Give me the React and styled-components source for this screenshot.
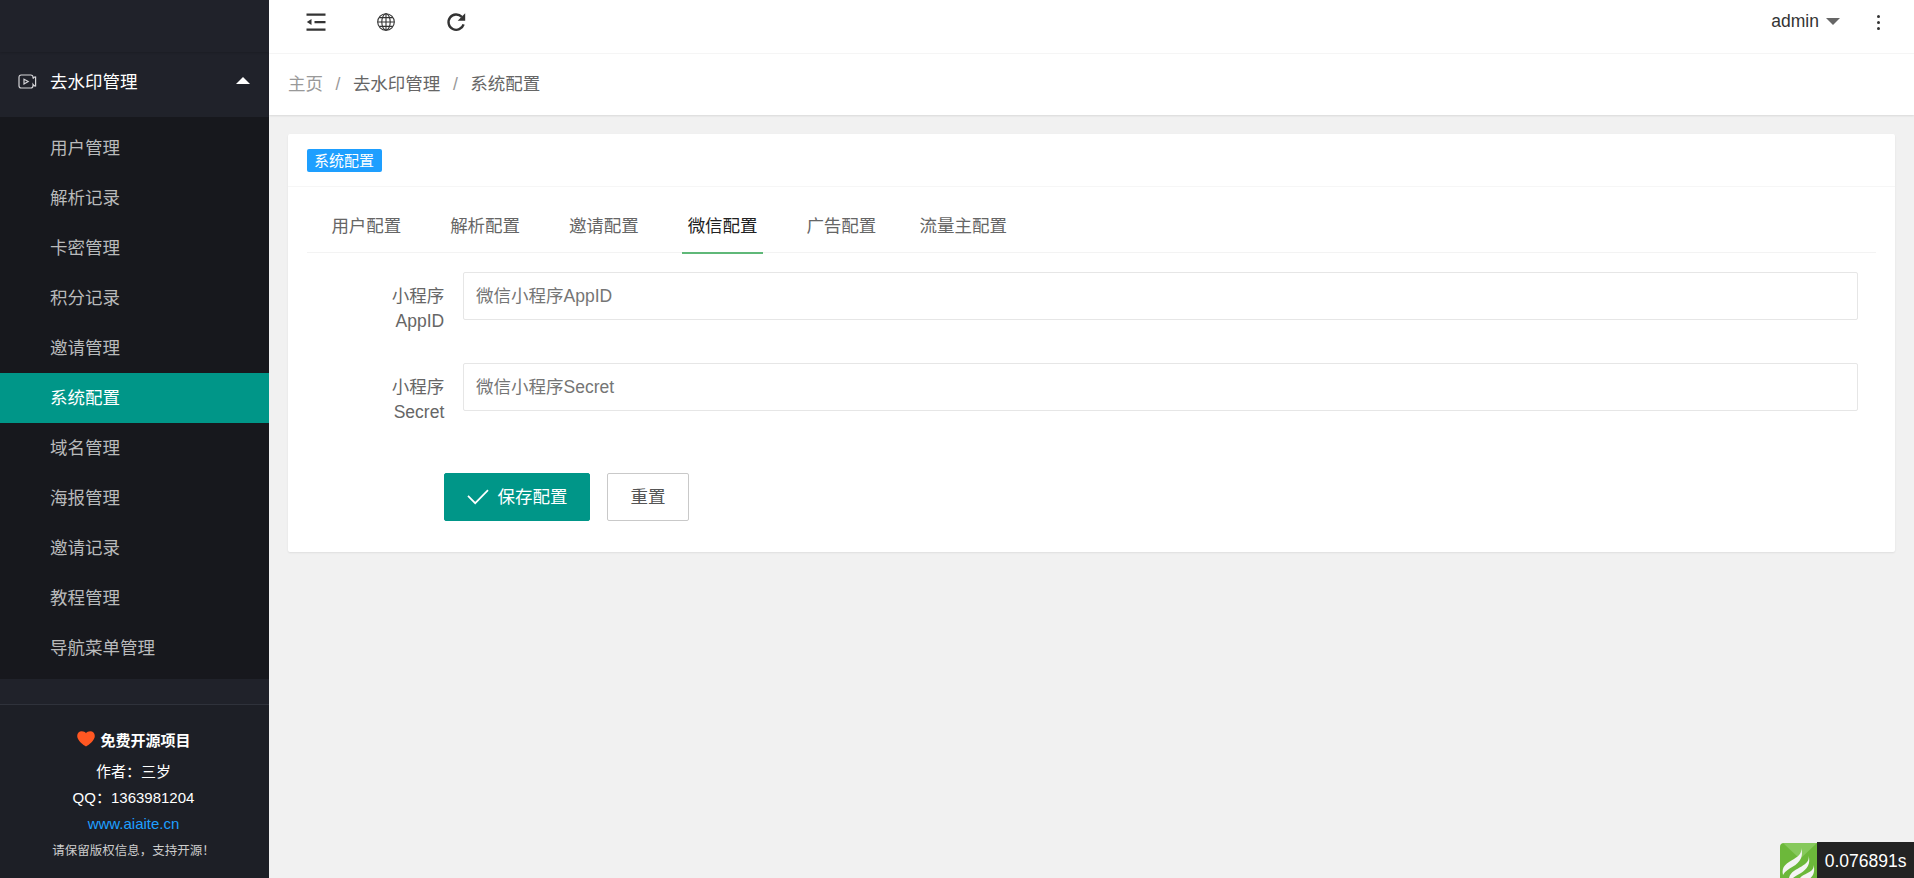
import React, { useState } from 'react'
import styled, { createGlobalStyle } from 'styled-components'

const menuItems = [
  '用户管理',
  '解析记录',
  '卡密管理',
  '积分记录',
  '邀请管理',
  '系统配置',
  '域名管理',
  '海报管理',
  '邀请记录',
  '教程管理',
  '导航菜单管理',
]

const tabs = ['用户配置', '解析配置', '邀请配置', '微信配置', '广告配置', '流量主配置']

function Sidebar({ active, setActive }) {
  return (
    <Side>
      <Logo />
      <NavTitle>
        <svg width="19" height="16" viewBox="0 0 19 16" fill="none" stroke="#d5d5d8" strokeWidth="1.2">
          <path d="M15 4.600V3.200Q15 1 12.800 1H3.200Q1 1 1 3.200v8.600Q1 14 3.200 14h9.600q2.200 0 2.200-2.200v-1.400q1.400 2 2.600 1.600V3q-1.200-.4-2.600 1.600" />
          <path d="M6 5.200v4.800l4.200-2.400z" />
        </svg>
        <span>去水印管理</span>
        <CaretUp />
      </NavTitle>
      <SubMenu>
        {menuItems.map((item) => (
          <MenuItem key={item} $active={item === active} onClick={() => setActive(item)}>
            {item}
          </MenuItem>
        ))}
      </SubMenu>
      <Copyright>
        <Project>
          <svg width="18" height="16" viewBox="0 0 18 16">
            <path
              fill="#ff5722"
              d="M9 15.600C6.500 14 .2 9.600 .2 5 .2 2.200 2.200.3 4.700.3 6.600.3 8.100 1 9 2.200 9.900 1 11.400.3 13.300.3c2.500 0 4.500 1.900 4.500 4.700 0 4.600-6.300 9-8.800 10.600z"
            />
          </svg>
          免费开源项目
        </Project>
        <Line>作者：三岁</Line>
        <Line>QQ：1363981204</Line>
        <Line><SiteLink href="#">www.aiaite.cn</SiteLink></Line>
        <Note>请保留版权信息，支持开源！</Note>
      </Copyright>
    </Side>
  )
}

function Header() {
  return (
    <TopBar>
      <IconCell>
        <svg width="20" height="20" viewBox="0 0 20 20" fill="#333">
          <path d="M.5 1.500h19v2.300H.5zM8.500 9h11v2.300h-11zM.5 16.500h19v2.300H.5zM.8 10.100l4.700-3v6z" />
        </svg>
      </IconCell>
      <IconCell>
        <svg width="18" height="18" viewBox="0 0 18 18" fill="none" stroke="#333" strokeWidth="1.100">
          <circle cx="9" cy="9" r="8.300" />
          <ellipse cx="9" cy="9" rx="4.200" ry="8.300" />
          <path d="M9 .7v16.600M.7 9h16.600M2.200 4.600h13.600M2.200 13.400h13.600" />
        </svg>
      </IconCell>
      <IconCell>
        <svg width="20" height="20" viewBox="0 0 20 20">
          <path d="M17.600 12.400A7.700 7.700 0 1 1 15.800 4.800" fill="none" stroke="#333" strokeWidth="2.400" />
          <path d="M19.200 1.200v7.500h-7.500z" fill="#333" />
        </svg>
      </IconCell>
      <User>
        admin
        <CaretDown />
      </User>
      <More>
        <i />
        <i />
        <i />
      </More>
    </TopBar>
  )
}

function ConfigForm() {
  return (
    <Form onSubmit={(e) => e.preventDefault()}>
      <FormItem>
        <Label>小程序 AppID</Label>
        <Input placeholder="微信小程序AppID" />
      </FormItem>
      <FormItem>
        <Label>小程序 Secret</Label>
        <Input placeholder="微信小程序Secret" />
      </FormItem>
      <Actions>
        <Button $primary>
          <svg width="22" height="16" viewBox="0 0 22 16" fill="none" stroke="#fff" strokeWidth="1.700">
            <path d="M1 6.800l7.200 7.400L21 1.200" />
          </svg>
          保存配置
        </Button>
        <Button type="reset">重置</Button>
      </Actions>
    </Form>
  )
}

export default function App() {
  const [active, setActive] = useState('系统配置')
  const [tab, setTab] = useState('微信配置')

  return (
    <Layout>
      <GlobalStyle />
      <Sidebar active={active} setActive={setActive} />
      <Main>
        <Header />
        <Breadcrumb>
          <Crumb $muted>主页</Crumb>
          <Slash>/</Slash>
          <Crumb>去水印管理</Crumb>
          <Slash>/</Slash>
          <Crumb>{active}</Crumb>
        </Breadcrumb>
        <Card>
          <CardHeader>
            <Badge>系统配置</Badge>
          </CardHeader>
          <CardBody>
            <Tabs>
              {tabs.map((t) => (
                <Tab key={t} onClick={() => setTab(t)}>
                  <TabText $active={t === tab}>{t}</TabText>
                </Tab>
              ))}
            </Tabs>
            <ConfigForm />
          </CardBody>
        </Card>
      </Main>
      <Trace>
        <svg width="37" height="35" viewBox="0 0 37 35">
          <path d="M0 35V4q0-4 4-4h33v35z" fill="#6cb83a" />
          <path d="M3 0h34L20 16z" fill="#86c95c" />
          <path d="M21 5c1 5-2 8-7 11C7 20 1 23 3 32c2-4 6-6 10-8.500C20 19.500 24 13 21 5z" fill="#f4f4f4" />
          <path d="M28.500 12.500c1 5-2 8-7 11-5 3-11 5-12.500 11.500h4c2-2 5-3 8-5 6-4 10-9 7.500-17.500z" fill="#f4f4f4" />
          <path d="M33.500 22c.5 4-2 6-6 8-3 1.500-6 3-7.500 5h10.500c3.500-3 4.500-8 3-13z" fill="#f4f4f4" />
        </svg>
        <TraceTime>0.076891s</TraceTime>
      </Trace>
    </Layout>
  )
}

const GlobalStyle = createGlobalStyle`
  * {
    box-sizing: border-box;
  }
  body {
    margin: 0;
    overflow: hidden;
    background: #f1f1f1;
    color: #666;
    font: 17.5px/25px "Liberation Sans", "Noto Sans CJK SC", sans-serif;
  }
  svg {
    display: block;
    flex: none;
  }
`

const Layout = styled.div`
  display: flex;
  height: 878px;
`

const Side = styled.aside`
  display: flex;
  flex-direction: column;
  width: 269px;
  flex: none;
  background: #20222a;
  color: #fff;
`

const Logo = styled.div`
  height: 52px;
  flex: none;
  box-shadow: 0 1px 2px rgba(0, 0, 0, 0.15);
`

const NavTitle = styled.div`
  display: flex;
  align-items: center;
  height: 65px;
  padding: 0 19px 5px 18px;
  flex: none;

  span {
    margin-left: 13px;
    flex: 1;
  }
`

const CaretUp = styled.i`
  margin-bottom: 3px;
  border: 7px solid transparent;
  border-top: 0;
  border-bottom-color: #fff;
`

const CaretDown = styled.i`
  margin-left: 7px;
  border: 7px solid transparent;
  border-bottom: 0;
  border-top-color: #666;
`

const SubMenu = styled.div`
  padding: 6px 0;
  background: #17181d;
`

const MenuItem = styled.div`
  height: 50px;
  padding-left: 50px;
  line-height: 50px;
  cursor: pointer;
  color: ${(p) => (p.$active ? '#fff' : '#b9babb')};
  background: ${(p) => (p.$active ? '#009688' : 'transparent')};
`

const Copyright = styled.div`
  display: flex;
  flex-direction: column;
  align-items: center;
  flex: 1;
  margin-top: 25px;
  padding: 23px 2px 0 0;
  border-top: 1px solid #2f323b;
  background: #1d1f26;
  font-size: 15px;
`

const Project = styled.div`
  display: flex;
  gap: 5px;
  height: 31px;
  padding-left: 1px;
  font-weight: bold;

  svg {
    margin-top: 3px;
  }
`

const Line = styled.div`
  height: 26px;
  line-height: 26px;
`

const SiteLink = styled.a`
  color: #1e9fff;
  text-decoration: none;
`

const Note = styled.div`
  line-height: 28px;
  font-size: 12.5px;
  color: #ccc;
`

const Main = styled.main`
  flex: 1;
  min-width: 0;
`

const TopBar = styled.header`
  display: flex;
  align-items: flex-start;
  height: 54px;
  padding: 0 34px 0 12px;
  background: #fff;
  border-bottom: 1px solid #f6f6f6;
`

const IconCell = styled.div`
  display: flex;
  align-items: center;
  justify-content: center;
  width: 70px;
  height: 44px;
`

const User = styled.div`
  display: flex;
  align-items: center;
  height: 43px;
  margin-left: auto;
  color: #333;
`

const More = styled.div`
  display: flex;
  flex-direction: column;
  justify-content: center;
  gap: 3px;
  height: 45px;
  margin-left: 37px;

  i {
    width: 3px;
    height: 3px;
    border-radius: 50%;
    background: #333;
  }
`

const Breadcrumb = styled.div`
  display: flex;
  align-items: center;
  height: 61px;
  padding: 0 19px;
  background: #fff;
  box-shadow: 0 1px 2px rgba(0, 0, 0, 0.1);
`

const Crumb = styled.span`
  color: ${(p) => (p.$muted ? '#999' : '#666')};
`

const Slash = styled.span`
  margin: 0 12.500px;
  color: #999;
`

const Card = styled.section`
  height: 418px;
  margin: 19px 19px 0;
  border-radius: 2px;
  background: #fff;
  box-shadow: 0 1px 2px rgba(0, 0, 0, 0.08);
`

const CardHeader = styled.div`
  display: flex;
  align-items: center;
  height: 53px;
  padding: 0 19px;
  border-bottom: 1px solid #f6f6f6;
`

const Badge = styled.span`
  height: 23px;
  padding: 0 8px 0 7px;
  border-radius: 2px;
  background: #1e9fff;
  color: #fff;
  font-size: 15px;
  line-height: 23px;
`

const CardBody = styled.div`
  padding: 12px 19px 0;
`

const Tabs = styled.div`
  display: flex;
  height: 54px;
  border-bottom: 1px solid #f3f3f3;
`

const Tab = styled.div`
  padding: 0 18.750px;
  cursor: pointer;
`

const TabText = styled.div`
  min-width: 81.250px;
  height: 55px;
  line-height: 55px;
  text-align: center;
  color: ${(p) => (p.$active ? '#222' : '#666')};
  border-bottom: 2px solid ${(p) => (p.$active ? '#5fb878' : 'transparent')};
`

const Form = styled.form`
  padding: 19px 18px 0 0;
`

const FormItem = styled.div`
  display: flex;
  height: 91px;
`

const Label = styled.label`
  width: 156px;
  flex: none;
  padding: 12px 18.750px 0 70px;
  text-align: right;
`

const Input = styled.input`
  flex: 1;
  height: 48px;
  padding: 0 12px;
  border: 1px solid #e6e6e6;
  border-radius: 2px;
  outline: none;
  font: inherit;

  &::placeholder {
    color: #757575;
  }
`

const Actions = styled.div`
  display: flex;
  gap: 17px;
  padding: 19px 0 0 137px;
`

const Button = styled.button`
  display: flex;
  align-items: center;
  justify-content: center;
  gap: 9px;
  width: ${(p) => (p.$primary ? '146px' : '82px')};
  height: 48px;
  padding: 0;
  border: 1px solid ${(p) => (p.$primary ? '#009688' : '#c9c9c9')};
  border-radius: 2px;
  background: ${(p) => (p.$primary ? '#009688' : '#fff')};
  color: ${(p) => (p.$primary ? '#fff' : '#555')};
  font: inherit;
  cursor: pointer;
`

// debug trace in the window corner
const Trace = styled.div`
  position: fixed;
  right: 0;
  bottom: 0;
  display: flex;
  align-items: flex-end;
`

const TraceTime = styled.div`
  height: 36px;
  padding: 0 7.500px;
  background: #232323;
  color: #fff;
  line-height: 38px;
`
